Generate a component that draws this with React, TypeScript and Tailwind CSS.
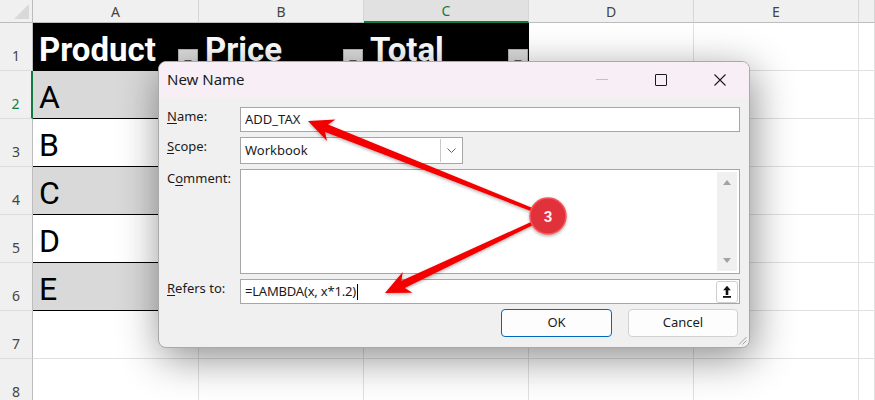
import React from "react";

const COLS = ["A", "B", "C", "D", "E", ""];
const ROWS = [1, 2, 3, 4, 5, 6, 7, 8];
const HEADERS = ["Product", "Price", "Total"];
const ITEMS = ["A", "B", "C", "D", "E"];

// tapered annotation arrow, tail -> tip
function arrowPoints(x1: number, y1: number, x2: number, y2: number) {
  const dx = x2 - x1;
  const dy = y2 - y1;
  const len = Math.hypot(dx, dy);
  const ux = dx / len;
  const uy = dy / len;
  const px = -uy;
  const py = ux;
  const head = 25;
  const neck = 20;
  const half = 11.5;
  const tail = 1.5;
  const shaft = 4;
  const bx = x2 - ux * head;
  const by = y2 - uy * head;
  const nx = x2 - ux * neck;
  const ny = y2 - uy * neck;
  const pts = [
    [x1 + px * tail, y1 + py * tail],
    [nx + px * shaft, ny + py * shaft],
    [bx + px * half, by + py * half],
    [x2, y2],
    [bx - px * half, by - py * half],
    [nx - px * shaft, ny - py * shaft],
    [x1 - px * tail, y1 - py * tail],
  ];
  return pts.map((p) => p.map((v) => v.toFixed(1)).join(",")).join(" ");
}

function FilterButton() {
  return (
    <span className="mb-[2px] mr-[1px] flex h-[20px] w-[20px] shrink-0 items-end justify-center border border-[#b4b4b4] bg-[#dedede] pb-[4px]">
      <span className="h-0 w-0 border-x-[4px] border-t-[4px] border-x-transparent border-t-[#555]" />
    </span>
  );
}

function ColHead({ label, i }: { label: string; i: number }) {
  if (i === 2) {
    return (
      <div className="flex items-center justify-center border-b-2 border-r border-b-[#107c41] border-r-[#d6d6d6] bg-[#e1e1e1] text-[14px] text-[#107c41]">
        {label}
      </div>
    );
  }
  return (
    <div className="flex items-center justify-center border-b border-r border-b-[#bdbdbd] border-r-[#d6d6d6] bg-[#f0f0f0] text-[14px] text-[#444]">
      {label}
    </div>
  );
}

function RowHead({ r }: { r: number }) {
  if (r === 2) {
    return (
      <div className="flex items-end justify-center border-b border-r-2 border-b-[#dcdcdc] border-r-[#107c41] bg-[#f0f0f0] pb-[7px] text-[14px] leading-[14px] text-[#107c41]">
        {r}
      </div>
    );
  }
  return (
    <div className="flex items-end justify-center border-b border-r border-b-[#dcdcdc] border-r-[#bdbdbd] bg-[#f0f0f0] pb-[7px] text-[14px] leading-[14px] text-[#444]">
      {r}
    </div>
  );
}

function Cell({ r, c }: { r: number; c: number }) {
  if (r === 1 && c <= 2) {
    return (
      <div className="flex items-end justify-between bg-black pl-[6px]">
        <span className="mb-[5px] font-['Roboto',sans-serif] text-[33px] font-bold leading-[32px] text-white">
          {HEADERS[c]}
        </span>
        <FilterButton />
      </div>
    );
  }
  if (r >= 2 && r <= 6 && c <= 2) {
    const fill = r % 2 === 0 ? "bg-[#d9d9d9]" : "bg-white";
    return (
      <div className={`flex items-end border-b border-black pl-[6px] ${fill}`}>
        {c === 0 && (
          <span className="mb-[5px] font-['Roboto',sans-serif] text-[32px] leading-[32px] text-black">
            {ITEMS[r - 2]}
          </span>
        )}
      </div>
    );
  }
  return <div className="border-b border-r border-[#e1e1e1] bg-white" />;
}

function Label({ u, rest, pre = "" }: { u: string; rest: string; pre?: string }) {
  return (
    <span className="w-[73px] shrink-0 text-[13px] leading-[18px] text-[#1b1b1b]">
      {pre}
      <span className="underline underline-offset-2">{u}</span>
      {rest}
    </span>
  );
}

function NewNameDialog() {
  return (
    <div className="absolute left-[158px] top-[61px] flex h-[287px] w-[592px] flex-col overflow-hidden rounded-[8px] border border-[#a9a9a9] bg-[#f0f0f0] shadow-[3px_10px_42px_rgba(0,0,0,0.45)]">
      <div className="flex h-[35px] shrink-0 items-center bg-[#f7eff5]">
        <span className="flex-1 pl-[8px] text-[15px] text-[#1b1b1b]">New Name</span>
        <span className="flex h-full w-[59px] items-center justify-center">
          <span className="h-px w-[12px] bg-[#c2c2c2]" />
        </span>
        <span className="flex h-full w-[59px] items-center justify-center">
          <span className="h-[12px] w-[12px] rounded-[1px] border border-[#1b1b1b]" />
        </span>
        <span className="flex h-full w-[59px] items-center justify-center">
          <svg width="12" height="12" viewBox="0 0 12 12">
            <path d="M0.5 0.5 L11.5 11.5 M11.5 0.5 L0.5 11.5" stroke="#1b1b1b" strokeWidth="1.1" />
          </svg>
        </span>
      </div>

      <div className="flex flex-1 flex-col pl-[8px] pr-[9px] pt-[10px]">
        <div className="flex items-start">
          <Label u="N" rest="ame:" />
          <div className="flex h-[25px] flex-1 items-center border border-[#a6a6a6] bg-white pl-[4px] text-[13px] text-[#1b1b1b]">
            ADD_TAX
          </div>
        </div>

        <div className="mt-[5px] flex items-start">
          <Label u="S" rest="cope:" />
          <div className="flex h-[27px] w-[223px] items-center border border-[#a6a6a6] bg-white pl-[4px] text-[13px] text-[#1b1b1b]">
            <span className="flex-1">Workbook</span>
            <span className="mr-px flex h-[23px] w-[21px] items-center justify-center border-l border-[#c9c9c9]">
              <svg width="9" height="5" viewBox="0 0 9 5">
                <path d="M0.5 0.5 L4.5 4.5 L8.5 0.5" fill="none" stroke="#606060" strokeWidth="1" />
              </svg>
            </span>
          </div>
        </div>

        <div className="mt-[5px] flex items-start">
          <Label pre="C" u="o" rest="mment:" />
          <div className="flex h-[105px] flex-1 justify-end border border-[#a6a6a6] bg-white p-[2px]">
            <div className="flex w-[20px] flex-col items-center justify-between bg-[#f0f0f0] py-[8px]">
              <span className="h-0 w-0 border-x-[4px] border-b-[5px] border-x-transparent border-b-[#a3a3a3]" />
              <span className="h-0 w-0 border-x-[4px] border-t-[5px] border-x-transparent border-t-[#a3a3a3]" />
            </div>
          </div>
        </div>

        <div className="mt-[5px] flex items-start">
          <Label u="R" rest="efers to:" />
          <div className="flex h-[25px] flex-1 items-center border border-[#a6a6a6] bg-white pl-[4px] text-[13px] text-[#1b1b1b]">
            <span className="tracking-[-0.2px]">=LAMBDA(x, x*1.2)</span>
            <span className="ml-px h-[16px] w-px bg-black" />
            <span className="flex-1" />
            <span className="mr-px flex h-[22px] w-[22px] items-center justify-center rounded-[3px] border border-[#cfcfcf] bg-white">
              <svg width="10" height="13" viewBox="0 0 10 13">
                <path d="M5 0.8 L1.2 5.2 H3.7 V10 H6.3 V5.2 H8.8 Z" fill="#111" />
                <rect x="1" y="11" width="8" height="1.8" fill="#111" />
              </svg>
            </span>
          </div>
        </div>

        <div className="mt-[5px] flex justify-end gap-[16px] pr-[2px]">
          <button className="h-[28px] w-[111px] rounded-[4px] border border-[#0067c0] bg-[#fdfdfd] text-[13px] text-[#1b1b1b]">
            OK
          </button>
          <button className="h-[28px] w-[110px] rounded-[4px] border border-[#d1d1d1] bg-[#fdfdfd] text-[13px] text-[#1b1b1b]">
            Cancel
          </button>
        </div>
      </div>

      <svg className="absolute bottom-[2px] right-[2px]" width="9" height="9" viewBox="0 0 9 9">
        <path d="M8.5 1 L1 8.5 M8.5 4.5 L4.5 8.5" stroke="#a0a0a0" strokeWidth="1" />
      </svg>
    </div>
  );
}

function Annotation() {
  return (
    <svg className="pointer-events-none absolute left-0 top-0" width="875" height="400" viewBox="0 0 875 400">
      <defs>
        <filter id="shade" x="-20%" y="-20%" width="140%" height="140%">
          <feDropShadow dx="0" dy="1.5" stdDeviation="1.5" floodColor="#000" floodOpacity="0.3" />
        </filter>
      </defs>
      <g filter="url(#shade)">
        <polygon points={arrowPoints(548, 216, 308, 121)} fill="#f50000" />
        <polygon points={arrowPoints(548, 216, 385, 293)} fill="#f50000" />
        <circle cx="548" cy="216" r="18" fill="#e1323a" stroke="#f4585d" strokeWidth="1.5" />
      </g>
      <text
        x="548"
        y="221.5"
        textAnchor="middle"
        fontFamily="Roboto, sans-serif"
        fontWeight="700"
        fontSize="15"
        fill="#fff2f2"
      >
        3
      </text>
    </svg>
  );
}

export default function App() {
  return (
    <div className="relative h-[400px] w-[875px] overflow-hidden bg-white font-['Noto_Sans',sans-serif]">
      <div className="grid grid-cols-[33px_166px_165px_165px_165px_165px_1fr] grid-rows-[23px_repeat(8,48px)]">
        <div className="relative border-b border-r border-b-[#bdbdbd] border-r-[#bdbdbd] bg-[#f0f0f0]">
          <span className="absolute bottom-[3px] right-[3px] h-0 w-0 border-b-[15px] border-l-[15px] border-b-[#d9d9d9] border-l-transparent" />
        </div>
        {COLS.map((label, i) => (
          <ColHead key={i} label={label} i={i} />
        ))}
        {ROWS.map((r) => (
          <React.Fragment key={r}>
            <RowHead r={r} />
            {COLS.map((_, c) => (
              <Cell key={c} r={r} c={c} />
            ))}
          </React.Fragment>
        ))}
      </div>
      <NewNameDialog />
      <Annotation />
    </div>
  );
}
